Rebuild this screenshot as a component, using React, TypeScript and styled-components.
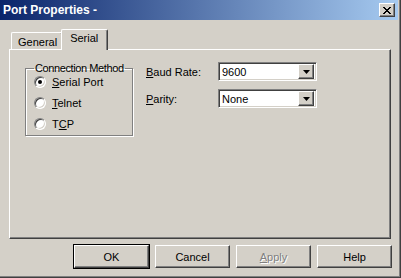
import React from "react";
import styled, { createGlobalStyle } from "styled-components";

const Global = createGlobalStyle`
  html, body { margin: 0; padding: 0; background: #d4d0c8; }
  body {
    font-family: "Liberation Sans", Arial, sans-serif;
    font-size: 11px;
    color: #000;
  }
`;

const Window = styled.div`
  width: 401px;
  height: 278px;
  box-sizing: border-box;
  background: #d4d0c8;
  border-right: 1px solid #404040;
  border-bottom: 1px solid #404040;
  box-shadow: inset -1px -1px #808080;
  display: flex;
  flex-direction: column;
`;

const TitleBar = styled.div`
  height: 20px;
  margin-right: 2px;
  display: flex;
  align-items: center;
  justify-content: space-between;
  padding: 0 3px 0 3px;
  background: linear-gradient(to right, #0a246a, #a6caf0);
`;

const Title = styled.div`
  color: #fff;
  font-weight: bold;
  font-size: 12px;
`;

const Raised = styled.div`
  box-sizing: border-box;
  background: #d4d0c8;
  border: 1px solid;
  border-color: #fff #404040 #404040 #fff;
  box-shadow: inset -1px -1px #808080;
`;

const CloseBtn = styled(Raised)`
  width: 16px;
  height: 14px;
  display: flex;
  align-items: center;
  justify-content: center;
`;

const Body = styled.div`
  flex: 1;
  display: flex;
  flex-direction: column;
  padding: 9px 9px 0 9px;
`;

const TabRow = styled.div`
  display: flex;
  align-items: flex-end;
  height: 20px;
  padding-left: 2px;
`;

const Tab = styled.div<{ active?: boolean }>`
  position: relative;
  z-index: ${p => (p.active ? 1 : 0)};
  box-sizing: border-box;
  height: ${p => (p.active ? 21 : 17)}px;
  margin-bottom: ${p => (p.active ? -1 : 0)}px;
  padding: ${p => (p.active ? "2px 9px 0 8px" : "3px 5px 0 6px")};
  margin-left: ${p => (p.active ? -2 : 0)}px;
  background: #d4d0c8;
  border-top: 1px solid #fff;
  border-left: 1px solid #fff;
  border-right: 1px solid #404040;
  box-shadow: inset -1px 0 #808080;
  border-radius: 2px 2px 0 0;
  font-size: 11px;
`;

const Panel = styled.div`
  height: 190px;
  box-sizing: border-box;
  border: 1px solid;
  border-color: #fff #404040 #404040 #fff;
  box-shadow: inset -1px -1px #808080;
  display: flex;
  align-items: flex-start;
  padding: 12px 0 0 15px;
`;

const Group = styled.fieldset`
  box-sizing: border-box;
  width: 108px;
  min-width: 0;
  height: 74px;
  margin: 0;
  padding: 1px 0 0 8px;
  border: 1px solid #808080;
  box-shadow: inset 1px 1px #fff, 1px 1px #fff;
  display: flex;
  flex-direction: column;
  gap: 8px;
`;

const Legend = styled.legend`
  padding: 0 1px;
  margin-left: 0;
  font-size: 11px;
  letter-spacing: -0.4px;
  white-space: nowrap;
`;

const RadioRow = styled.div`
  display: flex;
  align-items: center;
  gap: 6px;
  height: 13px;
`;

const RadioDot = styled.span<{ checked?: boolean }>`
  width: 12px;
  height: 12px;
  box-sizing: border-box;
  border-radius: 50%;
  background: #fff;
  border: 1px solid;
  border-color: #808080 #fff #fff #808080;
  box-shadow: inset 1px 1px #404040, inset -1px -1px #d4d0c8;
  display: flex;
  align-items: center;
  justify-content: center;
  &::after {
    content: "";
    width: 4px;
    height: 4px;
    border-radius: 50%;
    background: ${p => (p.checked ? "#000" : "transparent")};
  }
`;

const U = styled.span`
  text-decoration: underline;
`;

const Fields = styled.div`
  display: grid;
  grid-template-columns: 72px 99px;
  row-gap: 8px;
  align-items: center;
  margin: 0 0 0 13px;
`;

const Combo = styled.div`
  box-sizing: border-box;
  height: 19px;
  background: #fff;
  border: 1px solid;
  border-color: #808080 #fff #fff #808080;
  box-shadow: inset 1px 1px #404040, inset -1px -1px #d4d0c8;
  display: flex;
  align-items: center;
  padding: 2px 2px 2px 3px;
`;

const ComboText = styled.span`
  flex: 1;
`;

const DropBtn = styled(Raised)`
  width: 16px;
  height: 15px;
  display: flex;
  align-items: center;
  justify-content: center;
`;

const ButtonRow = styled.div`
  display: flex;
  justify-content: flex-end;
  gap: 6px;
  margin-top: 6px;
  margin-right: -1px;
`;

const Button = styled(Raised)<{ isDefault?: boolean; disabled?: boolean }>`
  width: 75px;
  height: 23px;
  display: flex;
  align-items: center;
  justify-content: center;
  font-size: 11px;
  color: ${p => (p.disabled ? "#808080" : "#000")};
  text-shadow: ${p => (p.disabled ? "1px 1px #fff" : "none")};
  ${p => (p.isDefault ? `outline: 1px solid #000; outline-offset: 0;` : "")}
`;

const Arrow = () => (
  <svg width="7" height="4" viewBox="0 0 7 4">
    <path d="M0 0h7L3.5 4z" fill="#000" />
  </svg>
);

export default function App() {
  return (
    <>
      <Global />
      <Window>
        <TitleBar>
          <Title>Port Properties -</Title>
          <CloseBtn>
            <svg width="8" height="7" viewBox="0 0 8 7">
              <path d="M0 0L7 7M1 0L8 7M7 0L0 7M8 0L1 7" stroke="#000" strokeWidth="1" />
            </svg>
          </CloseBtn>
        </TitleBar>
        <Body>
          <TabRow>
            <Tab>General</Tab>
            <Tab active>Serial</Tab>
          </TabRow>
          <Panel>
            <Group>
              <Legend>Connection Method</Legend>
              <RadioRow>
                <RadioDot checked />
                <span><U>S</U>erial Port</span>
              </RadioRow>
              <RadioRow>
                <RadioDot />
                <span><U>T</U>elnet</span>
              </RadioRow>
              <RadioRow>
                <RadioDot />
                <span>T<U>C</U>P</span>
              </RadioRow>
            </Group>
            <Fields>
              <span><U>B</U>aud Rate:</span>
              <Combo>
                <ComboText>9600</ComboText>
                <DropBtn><Arrow /></DropBtn>
              </Combo>
              <span><U>P</U>arity:</span>
              <Combo>
                <ComboText>None</ComboText>
                <DropBtn><Arrow /></DropBtn>
              </Combo>
            </Fields>
          </Panel>
          <ButtonRow>
            <Button isDefault>OK</Button>
            <Button>Cancel</Button>
            <Button disabled><U>A</U>pply</Button>
            <Button>Help</Button>
          </ButtonRow>
        </Body>
      </Window>
    </>
  );
}
